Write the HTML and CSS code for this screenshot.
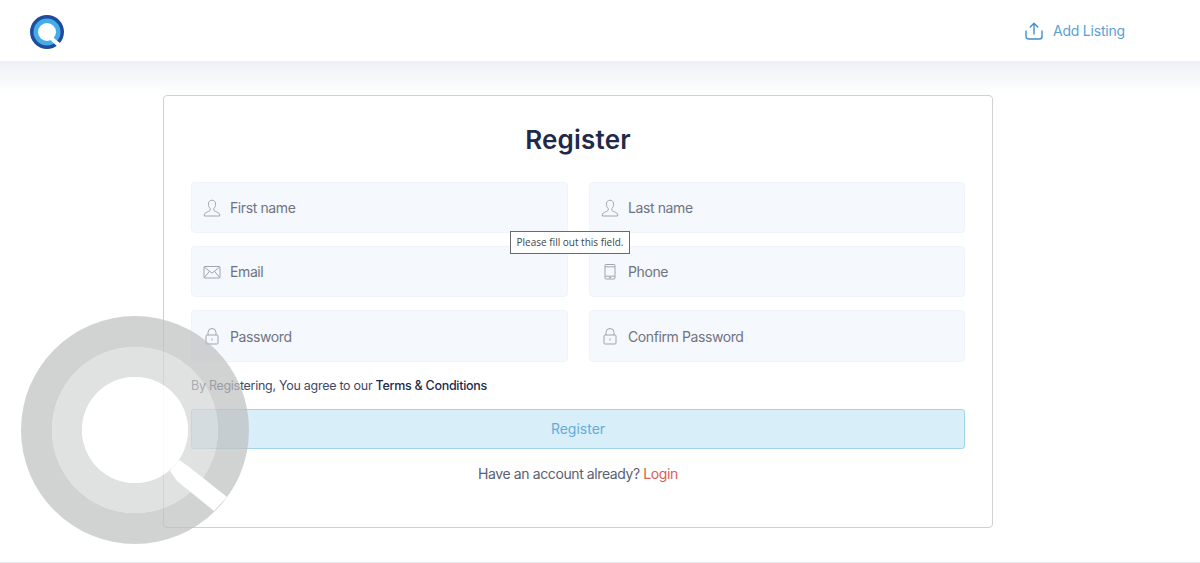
FILE: index.html
```html
<!DOCTYPE html>
<html lang="en">
<head>
<meta charset="UTF-8" />
<meta name="viewport" content="width=device-width, initial-scale=1" />
<title>Register</title>
<link rel="stylesheet" href="styles.css">
</head>
<body>
  <header class="topbar">
    <a href="#" class="logo" aria-label="Home">
      <svg width="36" height="36" viewBox="0 0 36 36">
        <circle cx="18" cy="18" r="17" fill="#1f4c9e"/>
        <circle cx="18" cy="18" r="13.5" fill="#45ade6"/>
        <circle cx="18" cy="18" r="9" fill="#fff"/>
        <polygon points="24,23 26,25 34,31.500 31,35 22.500,27 21,25.500" fill="#fff"/>
      </svg>
    </a>
    <a href="#" class="add-listing">
      <svg width="18" height="18" viewBox="0 0 18 18" fill="none" stroke="#3d8fd1" stroke-width="1.400" stroke-linecap="round" stroke-linejoin="round">
        <path d="M9 12V1.500M5.200 5 9 1.300 12.800 5"/>
        <path d="M1 9v5.500A2.500 2.500 0 0 0 3.500 17h11a2.500 2.500 0 0 0 2.500-2.500V9"/>
      </svg>
      Add Listing
    </a>
  </header>

  <main class="content">
    <div class="card">
      <h1>Register</h1>
      <form class="fields">
        <label class="field">
          <svg class="icon" viewBox="0 0 18 18"><path d="M9 1.200c-2.300 0-3.600 1.700-3.600 4 0 1.900.8 3.400 1.800 4.300v1.400c0 .8-1 1.200-2.500 1.900-2 .8-3.400 1.500-3.400 3v1.200h15.400v-1.200c0-1.500-1.400-2.200-3.400-3-1.500-.7-2.500-1.100-2.500-1.900V9.500c1-.9 1.800-2.400 1.800-4.300 0-2.300-1.300-4-3.600-4z"/></svg>
          <input type="text" placeholder="First name">
        </label>
        <label class="field">
          <svg class="icon" viewBox="0 0 18 18"><path d="M9 1.200c-2.300 0-3.600 1.700-3.600 4 0 1.900.8 3.400 1.800 4.300v1.400c0 .8-1 1.200-2.500 1.900-2 .8-3.400 1.500-3.400 3v1.200h15.400v-1.200c0-1.500-1.400-2.200-3.400-3-1.500-.7-2.500-1.100-2.500-1.900V9.500c1-.9 1.800-2.400 1.800-4.300 0-2.300-1.300-4-3.600-4z"/></svg>
          <input type="text" placeholder="Last name">
        </label>
        <label class="field">
          <svg class="icon" viewBox="0 0 18 18"><rect x="1" y="3.500" width="16" height="11.500" rx=".8"/><path d="M1.300 4 9 10.200 16.700 4M1.300 14.700 6.500 8.200M16.700 14.700 11.500 8.200"/></svg>
          <input type="email" placeholder="Email">
        </label>
        <label class="field">
          <svg class="icon" viewBox="0 0 18 18"><rect x="4" y="1.500" width="10" height="14.500" rx="1"/><path d="M4 3.800h10M4 13.200h10M8 14.600h2"/></svg>
          <input type="tel" placeholder="Phone">
        </label>
        <label class="field">
          <svg class="icon" viewBox="0 0 18 18"><rect x="3" y="8" width="12" height="9" rx="1"/><path d="M5 8V5.500a4 4 0 0 1 8 0V8M9 11.500v2"/></svg>
          <input type="password" placeholder="Password">
        </label>
        <label class="field">
          <svg class="icon" viewBox="0 0 18 18"><rect x="3" y="8" width="12" height="9" rx="1"/><path d="M5 8V5.500a4 4 0 0 1 8 0V8M9 11.500v2"/></svg>
          <input type="password" placeholder="Confirm Password">
        </label>
      </form>
      <p class="terms">By Registering, You agree to our <a href="#">Terms &amp; Conditions</a></p>
      <button type="button" class="submit">Register</button>
      <p class="login">Have an account already? <a href="#">Login</a></p>
      <div class="tooltip">Please fill out this field.</div>
    </div>
  </main>

  <footer class="bottom"></footer>

  <!-- faded logo sitting over the form -->
  <svg class="watermark" width="230" height="230" viewBox="20 316 230 230">
    <path fill-rule="evenodd" fill="rgb(189,191,191)" fill-opacity=".7" d="M21 430a114 114 0 1 0 228 0a114 114 0 1 0-228 0zM52 430a83 83 0 1 1 166 0a83 83 0 1 1-166 0z"/>
    <path fill-rule="evenodd" fill="rgb(211,212,212)" fill-opacity=".7" d="M52 430a83 83 0 1 0 166 0a83 83 0 1 0-166 0zM82 430a53 53 0 1 1 106 0a53 53 0 1 1-106 0z"/>
    <circle cx="135" cy="430" r="53" fill="#fff" fill-opacity=".88"/>
    <polygon points="179,460 188,466 227,497 214,511 177,481 170,471" fill="#fff"/>
  </svg>
</body>
</html>
```

FILE: styles.css
```css
* {
    box-sizing: border-box;
}
html, body {
    height: 100%;
}
body {
    font-family: Inter, "Open Sans", sans-serif;
    margin: 0;
    background-color: #ffffff;
    color: #5b6070;
    overflow: hidden;
    display: flex;
    flex-direction: column;
}
a {
    text-decoration: none;
}
.topbar {
    height: 61px;
    flex: none;
    display: flex;
    justify-content: space-between;
    align-items: center;
    padding: 0 75px 0 29px;
    background-color: #ffffff;
}
.logo {
    display: flex;
    margin-top: 3px;
}
.add-listing {
    display: flex;
    align-items: center;
    gap: 10px;
    color: #5a9fd0;
    font-size: 14px;
    letter-spacing: -0.2px;
}
.content {
    flex: 1;
    padding: 34px 0 0 163px;
    background: linear-gradient(#eef0f7, #ffffff) no-repeat top / 100% 34px;
}
.card {
    position: relative;
    width: 830px;
    height: 433px;
    padding: 0 27px;
    background-color: #ffffff;
    border: 1px solid #cfd1d4;
    border-radius: 4px;
}
.card h1 {
    margin: 26px 0 24px;
    height: 36px;
    line-height: 36px;
    text-align: center;
    color: #1f2a4b;
    font-size: 26px;
    font-weight: 600;
    letter-spacing: 0.2px;
}
.fields {
    display: grid;
    grid-template-columns: 377px 376px;
    grid-template-rows: 51px 51px 52px;
    column-gap: 21px;
    row-gap: 13px;
}
.field {
    display: flex;
    align-items: center;
    gap: 9px;
    padding-left: 11px;
    background-color: #f5f8fc;
    border: 1px solid #f0f3f9;
    border-radius: 4px;
}
.icon {
    width: 18px;
    height: 18px;
    flex: none;
    fill: none;
    stroke: #a0a4b0;
    stroke-width: 1;
}
.field input {
    flex: 1;
    min-width: 0;
    padding: 0;
    border: none;
    outline: none;
    background: transparent;
    font: inherit;
    font-size: 14px;
    letter-spacing: -0.4px;
    color: #5b6070;
}
.field input::placeholder {
    color: #6f7482;
    opacity: 1;
}
.terms {
    margin: 16px 0 15px;
    line-height: 16px;
    font-size: 12.500px;
    letter-spacing: -0.28px;
    color: #3f4a68;
}
.terms a {
    color: #1f2a4b;
    font-weight: 500;
}
.submit {
    display: block;
    width: 100%;
    height: 40px;
    padding-bottom: 2px;
    background-color: #d8eef9;
    border: 1px solid #a3d5ea;
    border-radius: 3px;
    color: #62aed8;
    font: inherit;
    font-size: 14px;
    cursor: pointer;
}
.login {
    margin: 15px 0 0;
    line-height: 20px;
    text-align: center;
    font-size: 14px;
    letter-spacing: -0.4px;
}
.login a {
    color: #d9604f;
}
.tooltip {
    position: absolute;
    left: 346px;
    top: 135px;
    width: 120px;
    height: 23px;
    line-height: 21px;
    text-align: center;
    background-color: #ffffff;
    border: 1px solid #6a6a6a;
    font-family: "Open Sans", sans-serif;
    font-size: 10px;
    color: #444444;
}
.bottom {
    height: 1px;
    flex: none;
    background-color: #e6e7e9;
}
.watermark {
    position: absolute;
    left: 20px;
    top: 316px;
}
```
